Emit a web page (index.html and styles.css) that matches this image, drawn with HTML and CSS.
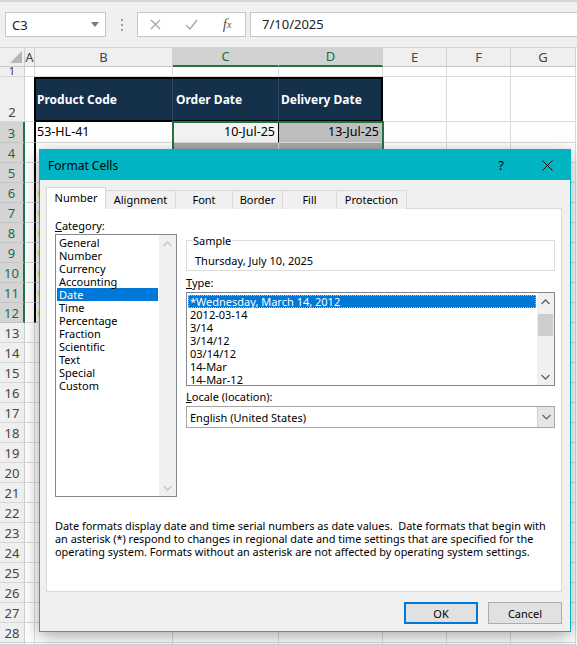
FILE: index.html
```html
<!DOCTYPE html>
<html lang="en">
<head>
    <meta charset="UTF-8">
    <title>Format Cells</title>
    <link rel="stylesheet" href="styles.css">
</head>
<body>
    <div class="formula-bar">
        <div class="name-box"><span>C3</span><span class="caret"></span></div>
        <div class="grip"><i></i><i></i><i></i></div>
        <div class="fx-buttons">
            <span class="fx-btn">
                <svg width="11" height="11" viewBox="0 0 11 11"><path d="M1 1L10 10M10 1L1 10" stroke="#a8a8a8" stroke-width="1.4"/></svg>
            </span>
            <span class="fx-btn">
                <svg width="13" height="11" viewBox="0 0 13 11"><path d="M1 6l4 4 7-9" fill="none" stroke="#a8a8a8" stroke-width="1.4"/></svg>
            </span>
            <span class="fx-btn fx">f<sub>x</sub></span>
        </div>
        <div class="formula-input">7/10/2025</div>
    </div>

    <div class="sheet">
        <div class="row col-heads">
            <div class="corner"><svg width="12" height="12" viewBox="0 0 12 12"><polygon points="12,0 12,12 0,12" fill="#b6b6b6"/></svg></div>
            <div>A</div>
            <div>B</div>
            <div class="on">C</div>
            <div class="on">D</div>
            <div>E</div>
            <div>F</div>
            <div>G</div>
        </div>
        <div class="row r1"><div class="rh">1</div><div></div><div></div><div></div><div></div><div></div><div></div><div></div></div>
        <div class="row r2">
            <div class="rh">2</div><div class="edge"></div>
            <div class="hd tb">Product Code</div>
            <div class="hd">Order Date</div>
            <div class="hd last">Delivery Date</div>
            <div></div><div></div><div></div>
        </div>
        <div class="row r3">
            <div class="rh on">3</div><div class="edge"></div>
            <div class="tb">53-HL-41</div>
            <div class="num active">10-Jul-25</div>
            <div class="num pick light">13-Jul-25</div>
            <div></div><div></div><div></div>
        </div>
        <div class="row"><div class="rh on">4</div><div class="edge"></div><div class="tb"></div><div class="pick"></div><div class="pick"></div><div></div><div></div><div></div></div>
        <div class="row"><div class="rh on">5</div><div class="edge"></div><div class="tb"></div><div class="pick"></div><div class="pick"></div><div></div><div></div><div></div></div>
        <div class="row"><div class="rh on">6</div><div class="edge"></div><div class="tb warm">(27-KM-08</div><div class="pick"></div><div class="pick"></div><div></div><div></div><div></div></div>
        <div class="row"><div class="rh on">7</div><div class="edge"></div><div class="tb warm">(61-PR-33</div><div class="pick"></div><div class="pick"></div><div></div><div></div><div></div></div>
        <div class="row"><div class="rh on">8</div><div class="edge"></div><div class="tb warm">(14-TX-92</div><div class="pick"></div><div class="pick"></div><div></div><div></div><div></div></div>
        <div class="row"><div class="rh on">9</div><div class="edge"></div><div class="tb warm">(88-QA-15</div><div class="pick"></div><div class="pick"></div><div></div><div></div><div></div></div>
        <div class="row"><div class="rh on">10</div><div class="edge"></div><div class="tb warm">(39-LD-60</div><div class="pick"></div><div class="pick"></div><div></div><div></div><div></div></div>
        <div class="row"><div class="rh on">11</div><div class="edge"></div><div class="tb warm">(72-BN-24</div><div class="pick"></div><div class="pick"></div><div></div><div></div><div></div></div>
        <div class="row"><div class="rh on">12</div><div class="edge"></div><div class="tb warm">(45-VC-71</div><div class="pick"></div><div class="pick"></div><div></div><div></div><div></div></div>
        <div class="row"><div class="rh">13</div><div></div><div></div><div></div><div></div><div></div><div></div><div></div></div>
        <div class="row"><div class="rh">14</div><div></div><div></div><div></div><div></div><div></div><div></div><div></div></div>
        <div class="row"><div class="rh">15</div><div></div><div></div><div></div><div></div><div></div><div></div><div></div></div>
        <div class="row"><div class="rh">16</div><div></div><div></div><div></div><div></div><div></div><div></div><div></div></div>
        <div class="row"><div class="rh">17</div><div></div><div></div><div></div><div></div><div></div><div></div><div></div></div>
        <div class="row"><div class="rh">18</div><div></div><div></div><div></div><div></div><div></div><div></div><div></div></div>
        <div class="row"><div class="rh">19</div><div></div><div></div><div></div><div></div><div></div><div></div><div></div></div>
        <div class="row"><div class="rh">20</div><div></div><div></div><div></div><div></div><div></div><div></div><div></div></div>
        <div class="row"><div class="rh">21</div><div></div><div></div><div></div><div></div><div></div><div></div><div></div></div>
        <div class="row"><div class="rh">22</div><div></div><div></div><div></div><div></div><div></div><div></div><div></div></div>
        <div class="row"><div class="rh">23</div><div></div><div></div><div></div><div></div><div></div><div></div><div></div></div>
        <div class="row"><div class="rh">24</div><div></div><div></div><div></div><div></div><div></div><div></div><div></div></div>
        <div class="row"><div class="rh">25</div><div></div><div></div><div></div><div></div><div></div><div></div><div></div></div>
        <div class="row"><div class="rh">26</div><div></div><div></div><div></div><div></div><div></div><div></div><div></div></div>
        <div class="row"><div class="rh">27</div><div></div><div></div><div></div><div></div><div></div><div></div><div></div></div>
        <div class="row"><div class="rh">28</div><div></div><div></div><div></div><div></div><div></div><div></div><div></div></div>
        <div class="row r-last"><div class="rh"></div><div></div><div></div><div></div><div></div><div></div><div></div><div></div></div>

        <div class="selection"></div>
    </div>

    <div class="dialog">
        <div class="title-bar">
            <span class="title">Format Cells</span>
            <span class="title-btn">?</span>
            <span class="title-btn">
                <svg width="11" height="11" viewBox="0 0 11 11"><path d="M0.5 0.5L10.5 10.5M10.5 0.5L0.5 10.5" stroke="#111" stroke-width="1"/></svg>
            </span>
        </div>
        <div class="dialog-body">
            <div class="tabs">
                <div class="tab active">Number</div>
                <div class="tab">Alignment</div>
                <div class="tab">Font</div>
                <div class="tab">Border</div>
                <div class="tab">Fill</div>
                <div class="tab">Protection</div>
            </div>
            <div class="panel">
                <div class="panel-grid">
                    <div class="col-left">
                        <div class="label"><u>C</u>ategory:</div>
                        <div class="listbox cat-list">
                            <ul>
                                <li>General</li>
                                <li>Number</li>
                                <li>Currency</li>
                                <li>Accounting</li>
                                <li class="selected">Date</li>
                                <li>Time</li>
                                <li>Percentage</li>
                                <li>Fraction</li>
                                <li>Scientific</li>
                                <li>Text</li>
                                <li>Special</li>
                                <li>Custom</li>
                            </ul>
                            <div class="vscroll disabled">
                                <span class="arrow"><svg width="9" height="6" viewBox="0 0 9 6"><path d="M0.5 5L4.5 1L8.5 5" fill="none" stroke="#c4c4c4" stroke-width="1.3"/></svg></span>
                                <span class="arrow"><svg width="9" height="6" viewBox="0 0 9 6"><path d="M0.5 1L4.5 5L8.5 1" fill="none" stroke="#c4c4c4" stroke-width="1.3"/></svg></span>
                            </div>
                        </div>
                    </div>
                    <div class="col-right">
                        <fieldset class="sample">
                            <legend>Sample</legend>
                            <div class="sample-value">Thursday, July 10, 2025</div>
                        </fieldset>
                        <div class="label type-label"><u>T</u>ype:</div>
                        <div class="listbox type-list">
                            <ul>
                                <li class="selected focus">*Wednesday, March 14, 2012</li>
                                <li>2012-03-14</li>
                                <li>3/14</li>
                                <li>3/14/12</li>
                                <li>03/14/12</li>
                                <li>14-Mar</li>
                                <li>14-Mar-12</li>
                            </ul>
                            <div class="vscroll">
                                <span class="arrow"><svg width="9" height="6" viewBox="0 0 9 6"><path d="M0.5 5L4.5 1L8.5 5" fill="none" stroke="#606060" stroke-width="1.3"/></svg></span>
                                <span class="track"><span class="thumb"></span></span>
                                <span class="arrow"><svg width="9" height="6" viewBox="0 0 9 6"><path d="M0.5 1L4.5 5L8.5 1" fill="none" stroke="#606060" stroke-width="1.3"/></svg></span>
                            </div>
                        </div>
                        <div class="label locale-label"><u>L</u>ocale (location):</div>
                        <div class="combo">
                            <span>English (United States)</span>
                            <span class="combo-btn"><svg width="9" height="6" viewBox="0 0 9 6"><path d="M0.5 1L4.5 5L8.5 1" fill="none" stroke="#606060" stroke-width="1.2"/></svg></span>
                        </div>
                    </div>
                </div>
                <p class="desc">Date formats display date and time serial numbers as date values.&nbsp; Date formats that begin with<br>an asterisk (*) respond to changes in regional date and time settings that are specified for the<br>operating system. Formats without an asterisk are not affected by operating system settings.</p>
            </div>
            <div class="buttons">
                <button class="btn default">OK</button>
                <button class="btn">Cancel</button>
            </div>
        </div>
    </div>
</body>
</html>
```

FILE: styles.css
```css
* {
    box-sizing: border-box;
}

body {
    margin: 0;
    width: 577px;
    height: 645px;
    overflow: hidden;
    position: relative;
    background: #fff;
    font-family: "Noto Sans", "Liberation Sans", sans-serif;
    color: #000;
}

/* formula bar */
.formula-bar {
    height: 48px;
    display: flex;
    align-items: flex-start;
    padding-top: 10px;
    background: #f0f0f0;
    border-top: 2px solid #d6d6d6;
    border-bottom: 1px solid #d4d4d4;
}

.name-box {
    margin-left: 5px;
    width: 101px;
    height: 25px;
    display: flex;
    align-items: center;
    justify-content: space-between;
    padding: 0 6px 0 6px;
    background: #fff;
    border: 1px solid #c6c6c6;
    font-size: 13px;
    color: #222;
}

.caret {
    border-left: 4px solid transparent;
    border-right: 4px solid transparent;
    border-top: 5px solid #7a7a7a;
}

.grip {
    width: 31px;
    height: 25px;
    display: flex;
    flex-direction: column;
    align-items: center;
    justify-content: center;
}

.grip i {
    width: 2px;
    height: 2px;
    margin: 1.5px 0;
    background: #9c9c9c;
}

.fx-buttons {
    width: 109px;
    height: 25px;
    display: flex;
    background: #fff;
    border: 1px solid #c6c6c6;
}

.fx-btn {
    flex: 1;
    display: flex;
    align-items: center;
    justify-content: center;
}

.fx {
    font-family: "Liberation Serif", serif;
    font-style: italic;
    font-size: 15px;
    color: #555;
}

.fx sub {
    font-size: 10px;
    vertical-align: -1px;
}

.formula-input {
    flex: 1;
    height: 25px;
    margin-left: 4px;
    padding-left: 11px;
    background: #fff;
    border: 1px solid #c6c6c6;
    border-right: none;
    font-size: 13px;
    line-height: 23px;
    color: #222;
}

/* sheet grid */
.sheet {
    position: relative;
}

.row {
    display: grid;
    grid-template-columns: 25px 10px 138px 106px 104px 64px 64px 65px;
    height: 20px;
}

.row > div {
    overflow: hidden;
    white-space: nowrap;
    padding: 0 3px;
    font-size: 12.5px;
    line-height: 19px;
    border-right: 1px solid #dadada;
    border-bottom: 1px solid #dadada;
}

.row.col-heads {
    height: 19px;
}

.col-heads > div {
    padding: 0;
    text-align: center;
    font-size: 13px;
    line-height: 18px;
    color: #444;
    background: #efefef;
    border-right-color: #d0d0d0;
    border-bottom-color: #c6c6c6;
}

.col-heads > .on {
    background: #d2d2d2;
    color: #1e6b41;
    line-height: 17px;
    border-bottom: 2px solid #217346;
}

.col-heads > .corner {
    display: flex;
    align-items: flex-end;
    justify-content: flex-end;
    padding: 0 2px 3px 0;
}

.corner svg {
    display: block;
}

.row > .rh {
    display: flex;
    align-items: flex-end;
    justify-content: center;
    padding: 0;
    font-size: 13px;
    line-height: 18px;
    color: #444;
    background: #efefef;
    border-right-color: #d0d0d0;
    border-bottom-color: #d6d6d6;
}

.row > .rh.on {
    background: #d4d4d4;
    color: #1e6b41;
    border-right: 2px solid #217346;
    border-bottom-color: #c4c4c4;
}

.row.r1 {
    height: 10px;
}

.row.r1 > .rh {
    align-items: flex-start;
    line-height: 7px;
    font-size: 11px;
}

.row.r2 {
    height: 45px;
}

.row.r3 {
    height: 21px;
}

.row.r-last {
    height: 2px;
}

.row > .edge {
    border-right-color: #000;
}

.row > .tb {
    padding-left: 1px;
    border-left: 1px solid #000;
}

.row > .hd {
    display: flex;
    align-items: center;
    padding-left: 3px;
    background: #14304b;
    color: #fff;
    font-weight: 700;
    font-size: 12px;
    border-top: 2px solid #000;
    border-bottom: 2px solid #000;
    border-right-color: #2d4762;
}

.row > .hd.tb {
    padding-left: 1px;
}

.row > .hd.last {
    padding-left: 2px;
    border-right: 2px solid #000;
}

.row > .num {
    text-align: right;
    padding-right: 3px;
}

.row > .active {
    background: #f2f2f2;
    border-right-color: #000;
}

.row > .pick {
    background: #a9a9a9;
    border-bottom-color: #bdbdbd;
}

.row > .pick.light {
    background: #bfbfbf;
    border-bottom-color: #e0e0e0;
}

.row > .warm {
    padding-left: 2px;
    color: #dc9c48;
}

.selection {
    position: absolute;
    left: 172px;
    top: 73px;
    width: 212px;
    height: 203px;
    border: 2px solid #217346;
    pointer-events: none;
}

/* dialog */
.dialog {
    position: absolute;
    left: 39px;
    top: 149px;
    width: 532px;
    height: 483px;
    background: #f0f0f0;
    border: 1px solid #00b4c3;
    box-shadow: 0 4px 16px rgba(0, 0, 0, 0.35);
    font-size: 11px;
}

.title-bar {
    height: 30px;
    display: flex;
    align-items: center;
    padding-left: 8px;
    background: #00b4c3;
}

.title {
    flex: 1;
    font-size: 12px;
}

.title-btn {
    width: 46px;
    height: 30px;
    display: flex;
    align-items: center;
    justify-content: center;
    font-size: 13px;
}

.dialog-body {
    padding: 7px 8px 0 6px;
}

.tabs {
    display: flex;
    align-items: flex-end;
    height: 22px;
}

.tab {
    height: 19px;
    text-align: center;
    line-height: 18px;
    background: #f0f0f0;
    border-top: 1px solid #d9d9d9;
    border-left: 1px solid #d9d9d9;
}

.tab:nth-child(1) { width: 60px; }
.tab:nth-child(2) { width: 70px; }
.tab:nth-child(3) { width: 57px; }
.tab:nth-child(4) { width: 50px; }
.tab:nth-child(5) { width: 54px; }
.tab:nth-child(6) { width: 71px; border-right: 1px solid #d9d9d9; }

.tab.active {
    position: relative;
    z-index: 1;
    height: 22px;
    line-height: 20px;
    margin-right: -1px;
    background: #fff;
    border-right: 1px solid #d9d9d9;
}

.panel {
    height: 384px;
    margin-top: -1px;
    padding: 10px 0 0 8px;
    background: #fff;
    border: 1px solid #d9d9d9;
}

.panel-grid {
    display: grid;
    grid-template-columns: 122px 369px;
    column-gap: 9px;
    align-items: start;
}

.label {
    line-height: 13px;
}

.listbox {
    display: flex;
    background: #fff;
    border: 1px solid #828790;
}

.listbox ul {
    flex: 1;
    margin: 0;
    padding: 1px 1px 0;
    list-style: none;
    overflow: hidden;
}

.listbox li {
    padding-left: 2px;
    line-height: 13px;
    white-space: nowrap;
}

.listbox li.selected {
    background: #0078d7;
    color: #fff;
}

.listbox li.focus {
    outline: 1px dotted #f3b25a;
    outline-offset: -1px;
}

.cat-list {
    height: 263px;
    margin-top: 2px;
}

.vscroll {
    width: 17px;
    display: flex;
    flex-direction: column;
    justify-content: space-between;
    background: #f0f0f0;
}

.arrow {
    height: 17px;
    display: flex;
    align-items: center;
    justify-content: center;
}

.track {
    flex: 1;
}

.thumb {
    display: block;
    height: 22px;
    margin: 4px 0 0 1px;
    width: 15px;
    background: #cdcdcd;
}

.col-right {
    padding-top: 15px;
}

.sample {
    margin: 0;
    padding: 0 0 3px 5px;
    min-width: 0;
    border: 1px solid #dcdcdc;
}

.sample legend {
    padding: 0 1px;
    line-height: 13px;
}

.sample-value {
    margin-top: 7px;
    padding-left: 3px;
    line-height: 13px;
}

.type-label {
    margin-top: 5px;
}

.type-list {
    height: 94px;
    margin-top: 3px;
}

.type-list ul {
    padding-top: 2px;
}

.locale-label {
    margin-top: 4px;
}

.combo {
    height: 22px;
    margin-top: 3px;
    display: flex;
    align-items: center;
    padding-left: 3px;
    background: #fff;
    border: 1px solid #a6a6a6;
}

.combo-btn {
    margin-left: auto;
    width: 17px;
    height: 100%;
    display: flex;
    align-items: center;
    justify-content: center;
    background: #e5e5e5;
    border-left: 1px solid #cfcfcf;
}

.desc {
    margin: 22px 0 0;
    font-size: 10.9px;
    line-height: 13px;
    white-space: nowrap;
}

.buttons {
    display: flex;
    justify-content: flex-end;
    gap: 10px;
    margin-top: 10px;
}

.btn {
    width: 74px;
    height: 22px;
    padding: 0;
    font-family: inherit;
    font-size: 11px;
    color: #000;
    background: #e1e1e1;
    border: 1px solid #adadad;
}

.btn.default {
    border: 2px solid #0078d7;
}
```
